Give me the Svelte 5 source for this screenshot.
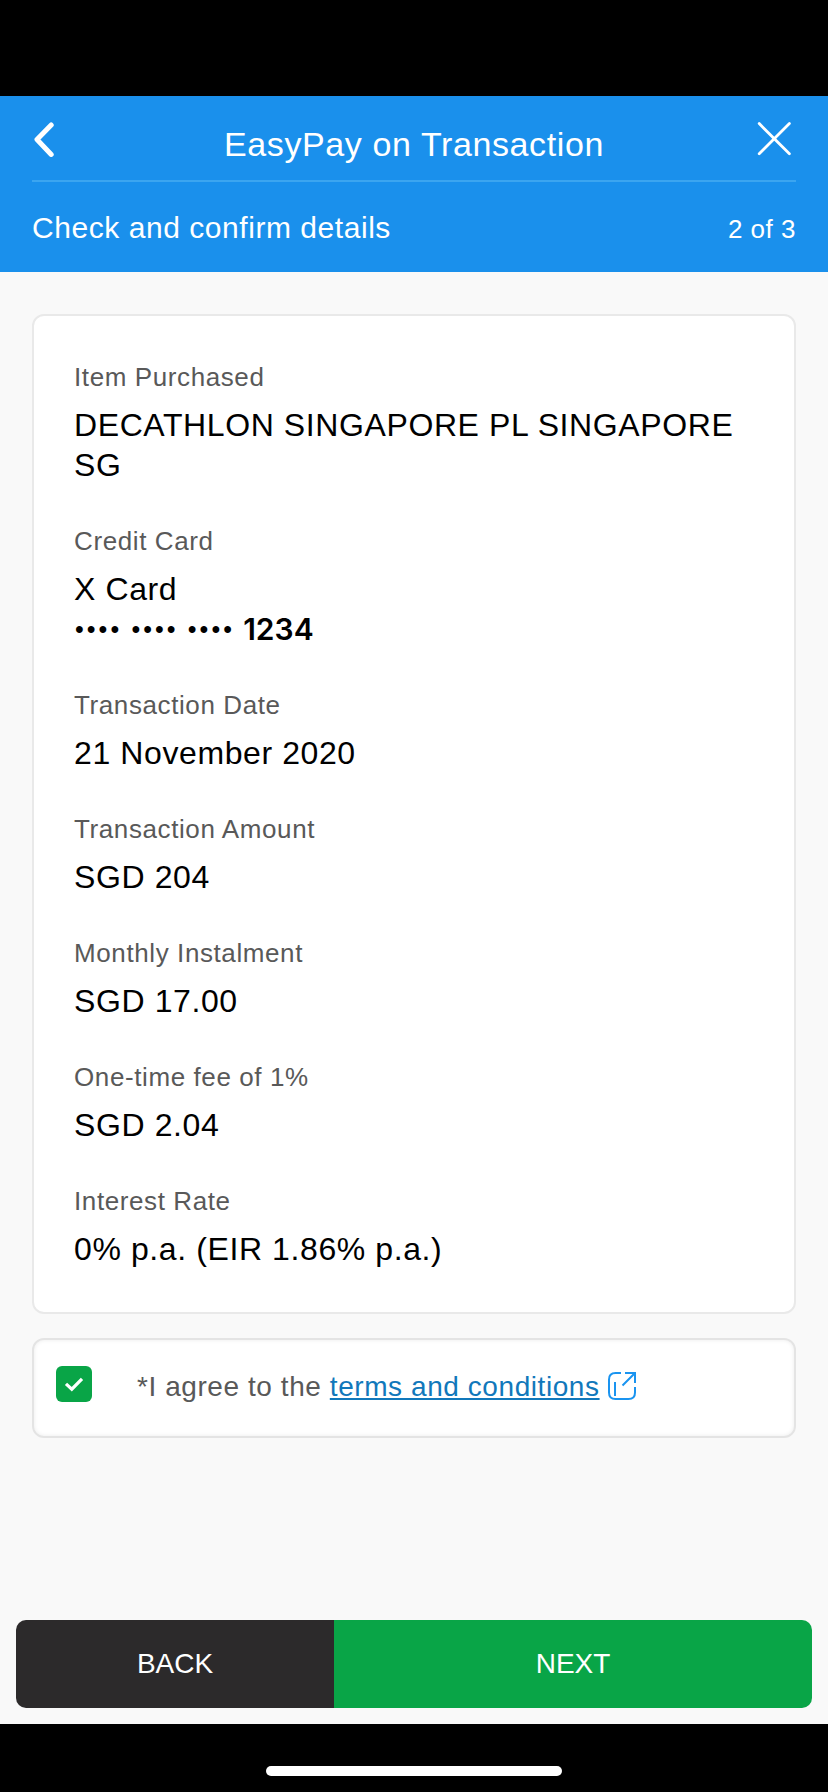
<script lang="ts">
  type Detail = { label: string; value: string; card?: string };

  const details: Detail[] = [
    { label: "Item Purchased", value: "DECATHLON SINGAPORE PL SINGAPORE SG" },
    { label: "Credit Card", value: "X Card", card: "1234" },
    { label: "Transaction Date", value: "21 November 2020" },
    { label: "Transaction Amount", value: "SGD 204" },
    { label: "Monthly Instalment", value: "SGD 17.00" },
    { label: "One-time fee of 1%", value: "SGD 2.04" },
    { label: "Interest Rate", value: "0% p.a. (EIR 1.86% p.a.)" },
  ];

  let agreed = $state(true);
</script>

<div class="screen">
  <div class="status-bar"></div>

  <header>
    <div class="title-row">
      <button class="icon-btn" aria-label="Back">
        <svg width="24" height="36" viewBox="0 0 24 36">
          <path d="M19.2 4 L5 18.6 L19.2 33.4" fill="none" stroke="#fff" stroke-width="5" stroke-linecap="round" stroke-linejoin="round" />
        </svg>
      </button>
      <h1>EasyPay on Transaction</h1>
      <button class="icon-btn" aria-label="Close">
        <svg width="44" height="36" viewBox="0 0 44 36">
          <path d="M7.2 2.6 L37.4 32.8 M37.4 2.6 L7.2 32.8" fill="none" stroke="#fff" stroke-width="2.8" stroke-linecap="round" />
        </svg>
      </button>
    </div>
    <div class="step-row">
      <h2>Check and confirm details</h2>
      <span class="step">2 of 3</span>
    </div>
  </header>

  <main>
    <dl class="panel details">
      {#each details as d (d.label)}
        <div class="detail">
          <dt>{d.label}</dt>
          <dd>{d.value}</dd>
          {#if d.card}
            <dd class="card-no">
              <span class="dots">••••</span>
              <span class="dots">••••</span>
              <span class="dots">••••</span>
              <b>{d.card}</b>
            </dd>
          {/if}
        </div>
      {/each}
    </dl>

    <div class="panel agree">
      <button
        class="checkbox"
        class:checked={agreed}
        role="checkbox"
        aria-checked={agreed}
        aria-label="Agree to the terms and conditions"
        onclick={() => (agreed = !agreed)}
      >
        {#if agreed}
          <svg width="36" height="36" viewBox="0 0 36 36">
            <path d="M10 17.8 L15.8 23.2 L26 12.8" fill="none" stroke="#fff" stroke-width="3.2" />
          </svg>
        {/if}
      </button>
      <p>*I agree to the <a href="#terms">terms and conditions</a></p>
      <svg class="external" width="28" height="28" viewBox="0 0 28 28">
        <path d="M13 1 H7.5 Q1 1 1 7.5 V20.5 Q1 27 7.5 27 H20.5 Q27 27 27 20.5 V15" />
        <path d="M17 1 H27 V11 M27 1 L14.5 13.5 M7 10 V24" />
      </svg>
    </div>
  </main>

  <footer>
    <button class="back">BACK</button>
    <button class="next">NEXT</button>
  </footer>

  <div class="home-area">
    <div class="home-indicator"></div>
  </div>
</div>

<style>
  :global(body) {
    margin: 0;
    background: #f9f9f9;
  }
  .screen {
    display: flex;
    flex-direction: column;
    width: 828px;
    height: 1792px;
    background: #f9f9f9;
    font-family: "Liberation Sans", Arial, sans-serif;
    color: #000;
  }
  button {
    font: inherit;
    border: none;
    padding: 0;
    cursor: pointer;
  }
  svg {
    display: block;
  }
  .status-bar {
    height: 96px;
    background: #000;
  }
  header {
    height: 176px;
    padding: 0 32px;
    background: #1a90ec;
    color: #fff;
  }
  .title-row {
    display: flex;
    align-items: flex-start;
    justify-content: space-between;
    box-sizing: border-box;
    height: 86px;
    padding-top: 25px;
    border-bottom: 2px solid #3ba5f0;
  }
  .icon-btn {
    display: flex;
    width: 44px;
    background: none;
  }
  h1 {
    margin: 3px 0 0;
    font-size: 34px;
    font-weight: 400;
    line-height: 40px;
    letter-spacing: 0.6px;
  }
  .step-row {
    display: flex;
    align-items: baseline;
    justify-content: space-between;
    padding-top: 28px;
  }
  h2 {
    margin: 0;
    font-size: 30px;
    font-weight: 400;
    line-height: 36px;
    letter-spacing: 0.55px;
  }
  .step {
    font-size: 26px;
    letter-spacing: 0.5px;
  }
  main {
    flex: 1;
    display: flex;
    flex-direction: column;
    gap: 24px;
    padding: 42px 32px 0;
  }
  .panel {
    box-sizing: border-box;
    margin: 0;
    border: 2px solid #e9e9e9;
    border-radius: 12px;
    background: #fff;
  }
  .details {
    display: flex;
    flex-direction: column;
    gap: 38px;
    height: 1000px;
    padding: 43px 40px;
  }
  dt {
    margin-bottom: 10px;
    font-size: 26px;
    line-height: 36px;
    letter-spacing: 0.6px;
    color: #595959;
  }
  dd {
    margin: 0;
    font-size: 32px;
    line-height: 40px;
    letter-spacing: 0.6px;
  }
  .card-no {
    display: flex;
    align-items: center;
    height: 40px;
  }
  .dots {
    width: 56.4px;
    font-size: 25px;
    letter-spacing: 3.05px;
    text-indent: 1px;
  }
  .card-no b {
    font-family: Inter, sans-serif;
    font-size: 30px;
    font-weight: 600;
    line-height: 36px;
    letter-spacing: 0;
  }
  .agree {
    display: flex;
    align-items: flex-start;
    height: 100px;
    padding: 26px 22px;
    border-color: #e4e4e4;
    box-shadow: inset 0 0 4px rgba(0, 0, 0, 0.08);
  }
  .checkbox {
    width: 36px;
    height: 36px;
    border-radius: 6px;
    background: #e4e4e4;
  }
  .checkbox.checked {
    background: #09a547;
  }
  .agree p {
    margin: 3px 0 0 45px;
    font-size: 28px;
    line-height: 36px;
    letter-spacing: 0.57px;
    color: #595959;
  }
  .agree a {
    color: #1178bb;
    text-decoration-thickness: 2px;
    text-underline-offset: 2px;
    text-decoration-skip-ink: none;
  }
  .external {
    margin: 6px 0 0 8px;
    fill: none;
    stroke: #1a94f0;
    stroke-width: 2;
  }
  footer {
    display: flex;
    height: 88px;
    margin: 0 16px 16px;
    border-radius: 10px;
    overflow: hidden;
  }
  footer button {
    font-size: 28px;
    color: #fff;
  }
  .back {
    width: 318px;
    background: #2c2a2b;
  }
  .next {
    flex: 1;
    background: #09a547;
  }
  .home-area {
    display: flow-root;
    height: 68px;
    background: #000;
  }
  .home-indicator {
    width: 296px;
    height: 10px;
    margin: 42px auto 0;
    border-radius: 5px;
    background: #fff;
  }
</style>
